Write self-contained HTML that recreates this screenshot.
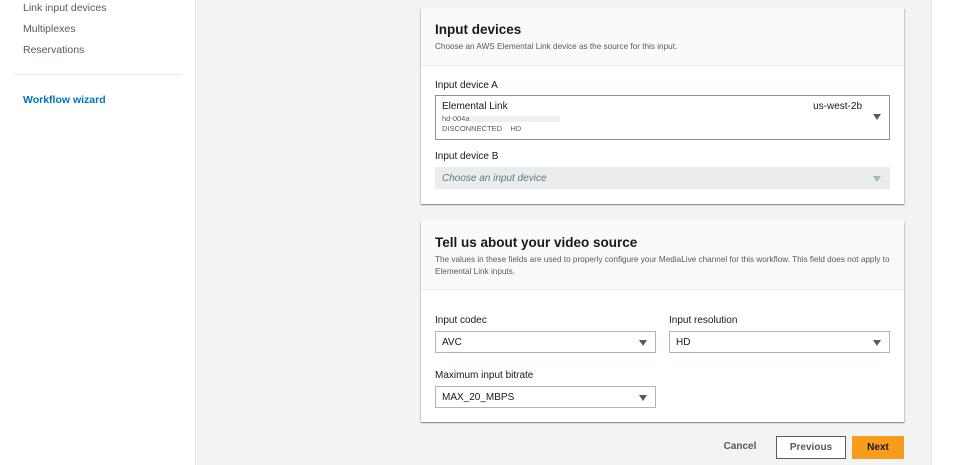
<!DOCTYPE html>
<html><head><style>
*{box-sizing:border-box;margin:0;padding:0}
body{width:960px;height:465px;overflow:hidden;background:#fff;font-family:"Liberation Sans",Arial,sans-serif;color:#16191f;position:relative}
.side{position:absolute;left:0;top:0;width:196px;height:465px;background:#fff;border-right:1px solid #e4e6e6}
.side a{position:absolute;left:23px;font-size:10.5px;color:#545b64}
.main{position:absolute;left:197px;top:0;width:735px;height:465px;background:#f2f3f3;border-right:1px solid #e4e6e6}
.card{position:absolute;left:421px;width:483px;background:#fff;box-shadow:0 1px 1px rgba(0,28,36,.3),1px 1px 1px rgba(0,28,36,.15),-1px 1px 1px rgba(0,28,36,.15)}
.hd{background:#fafafa;border-bottom:1px solid #eaeded;padding:14px 14px 0 14px}
.hd h2{font-size:13.5px;font-weight:bold;margin-bottom:4px}
.hd p{font-size:8.2px;color:#545b64;line-height:12px}
.lbl{position:absolute;font-size:10px;color:#16191f}
.sel{position:absolute;border:1px solid #aab7b8;height:22px;font-size:10px;padding:5px 6px;background:#fff}
.sel:after{content:"";position:absolute;right:8px;top:8px;border-left:4px solid transparent;border-right:4px solid transparent;border-top:6px solid #545b64}
.sel.big:after{top:18px}
.sel.dis:after{border-top-color:#aab7b8}
.btn{position:absolute;top:436px;height:23px;font-size:10px;font-weight:bold;text-align:center;line-height:21px}
</style></head><body>
<div class="side">
<a style="top:2px">Link input devices</a>
<a style="top:23px">Multiplexes</a>
<a style="top:44px">Reservations</a>
<div style="position:absolute;left:14px;top:74px;width:168px;border-top:1px solid #eaeded"></div>
<a style="top:94px;color:#0073bb;font-weight:bold">Workflow wizard</a>
</div>
<div class="main"></div>

<div class="card" style="top:8px;height:196px">
<div class="hd" style="height:58px"><h2>Input devices</h2><p>Choose an AWS Elemental Link device as the source for this input.</p></div>
</div>
<div class="lbl" style="left:435px;top:80px">Input device A</div>
<div class="sel big" style="left:435px;top:95px;width:455px;height:45px;border-color:#879596;padding:5px 6px">
<div style="font-size:10px">Elemental Link</div>
<div style="font-size:7.5px;color:#545b64;margin-top:2px">hd-004a<span style="display:inline-block;width:90px;height:6px;background:#eeeeee;vertical-align:middle"></span></div>
<div style="font-size:7.5px;color:#545b64;margin-top:1px">DISCONNECTED &nbsp;&nbsp; HD</div>
<div style="position:absolute;right:27px;top:5px;font-size:10px">us-west-2b</div>
</div>
<div class="lbl" style="left:435px;top:151px">Input device B</div>
<div class="sel dis" style="left:435px;top:167px;width:455px;background:#eaeded;border-color:#eaeded;color:#687078;font-style:italic">Choose an input device</div>

<div class="card" style="top:221px;height:201px">
<div class="hd" style="height:69px"><h2>Tell us about your video source</h2><p>The values in these fields are used to properly configure your MediaLive channel for this workflow. This field does not apply to Elemental Link inputs.</p></div>
</div>
<div class="lbl" style="left:435px;top:315px">Input codec</div>
<div class="sel" style="left:435px;top:331px;width:221px">AVC</div>
<div class="lbl" style="left:669px;top:315px">Input resolution</div>
<div class="sel" style="left:669px;top:331px;width:221px">HD</div>
<div class="lbl" style="left:435px;top:370px">Maximum input bitrate</div>
<div class="sel" style="left:435px;top:386px;width:221px">MAX_20_MBPS</div>

<div class="btn" style="left:712px;width:56px;color:#545b64">Cancel</div>
<div class="btn" style="left:776px;width:70px;border:1px solid #545b64;background:#fff;color:#545b64">Previous</div>
<div class="btn" style="left:852px;width:52px;border:1px solid #f89c1c;color:#16191f;background:#f89c1c">Next</div>
</body></html>
